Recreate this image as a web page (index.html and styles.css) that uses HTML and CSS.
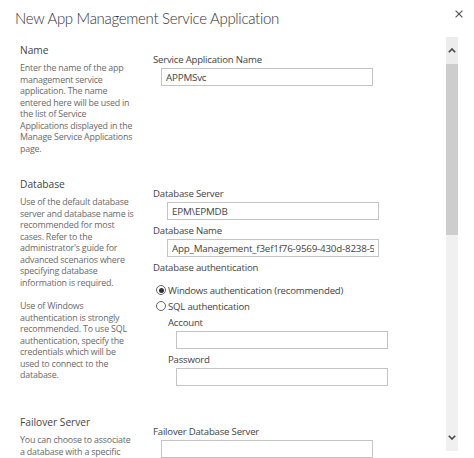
FILE: index.html
```html
<!DOCTYPE html>
<html>
<head>
<meta charset="utf-8">
<title>New App Management Service Application</title>
<link rel="stylesheet" href="styles.css">
</head>
<body>
<div class="dialog">
  <div class="titlebar">
    <h1 class="title">New App Management Service Application</h1>
    <span class="close" aria-label="Close"><svg width="8" height="8" viewBox="0 0 8 8"><path d="M0.6 0.6L7.4 7.4M7.4 0.6L0.6 7.4" stroke="#555" stroke-width="1.2" fill="none"/></svg></span>
  </div>
  <div class="frame">
    <div class="content">
      <section class="section sec-name">
        <div class="desc">
          <h2 class="sec-title">Name</h2>
          <p class="sec-text">Enter the name of the app<br>management service<br>application. The name<br>entered here will be used in<br>the list of Service<br>Applications displayed in the<br>Manage Service Applications<br>page.</p>
        </div>
        <div class="fields">
          <div class="field-label">Service Application Name</div>
          <input class="textbox ind-s" value="APPMSvc">
        </div>
      </section>

      <section class="section sec-db">
        <div class="desc">
          <h2 class="sec-title">Database</h2>
          <p class="sec-text">Use of the default database<br>server and database name is<br>recommended for most<br>cases. Refer to the<br>administrator's guide for<br>advanced scenarios where<br>specifying database<br>information is required.</p>
          <p class="sec-text para">Use of Windows<br>authentication is strongly<br>recommended. To use SQL<br>authentication, specify the<br>credentials which will be<br>used to connect to the<br>database.</p>
        </div>
        <div class="fields">
          <div class="field-label">Database Server</div>
          <input class="textbox ind-m" value="EPM\EPMDB">
          <div class="field-label">Database Name</div>
          <input class="textbox ind-m" value="App_Management_f3ef1f76-9569-430d-8238-5c2a7d1e9b04">
          <div class="field-label">Database authentication</div>
          <div class="radios">
            <div class="radio-row"><span class="radio checked"></span><span>Windows authentication (recommended)</span></div>
            <div class="radio-row"><span class="radio"></span><span>SQL authentication</span></div>
          </div>
          <div class="field-label ind-l sub-first">Account</div>
          <input class="textbox ind-xl">
          <div class="field-label ind-l">Password</div>
          <input class="textbox ind-xl last" type="password">
        </div>
      </section>

      <section class="section sec-fail">
        <div class="desc">
          <h2 class="sec-title">Failover Server</h2>
          <p class="sec-text">You can choose to associate<br>a database with a specific<br>failover server that is used in<br>conjunction with SQL Server<br>database mirroring.</p>
        </div>
        <div class="fields">
          <div class="field-label">Failover Database Server</div>
          <input class="textbox ind-s">
        </div>
      </section>
    </div>

    <div class="scrollbar">
      <div class="sb-btn sb-up"><svg width="8" height="5" viewBox="0 0 8 5"><path d="M0.8 4.2L4 1L7.2 4.2" stroke="#444" stroke-width="1.6" fill="none"/></svg></div>
      <div class="sb-thumb"></div>
      <div class="sb-track"></div>
      <div class="sb-btn sb-down"><svg width="8" height="5" viewBox="0 0 8 5"><path d="M0.8 0.8L4 4L7.2 0.8" stroke="#444" stroke-width="1.6" fill="none"/></svg></div>
    </div>
  </div>
</div>
</body>
</html>
```

FILE: styles.css
```css
html, body {
  margin: 0;
  padding: 0;
  background: #ffffff;
}

body {
  width: 474px;
  height: 458px;
  overflow: hidden;
  font-family: "Open Sans", "Noto Sans", sans-serif;
  color: #444444;
}

.dialog {
  display: flex;
  flex-direction: column;
  height: 458px;
}

.titlebar {
  display: flex;
  justify-content: space-between;
  align-items: flex-start;
  height: 37px;
  flex: none;
}

.title {
  margin: 0;
  padding: 8px 0 0 15px;
  font-family: "Lato", "Open Sans", sans-serif;
  font-weight: 300;
  font-size: 15px;
  letter-spacing: -0.3px;
  line-height: 20px;
  color: #333333;
}

.close {
  display: block;
  width: 8px;
  height: 8px;
  margin: 10px 11px 0 0;
}

.close svg {
  display: block;
}

.frame {
  display: flex;
  flex: 1;
  min-height: 0;
  padding-right: 16px;
}

.content {
  flex: 1;
  overflow: hidden;
}

.section {
  display: flex;
  align-items: flex-start;
}

.sec-name {
  padding-top: 6px;
  margin-bottom: 23px;
}

.sec-db {
  margin-bottom: 29px;
}

.desc {
  width: 133px;
  padding-left: 20px;
  flex: none;
}

.sec-title {
  margin: 0 0 5px;
  font-size: 10.2px;
  font-weight: 400;
  line-height: 14px;
  color: #444444;
}

.sec-text {
  margin: 0;
  font-size: 8.9px;
  letter-spacing: -0.2px;
  line-height: 11.5px;
  color: #6a6a6a;
  white-space: nowrap;
}

.sec-text.para {
  margin-top: 12px;
}

.fields {
  display: flex;
  flex-direction: column;
  align-items: flex-start;
  padding-top: 10px;
}

.field-label {
  font-size: 9.6px;
  letter-spacing: -0.2px;
  line-height: 14px;
  margin-bottom: 1px;
  color: #444444;
  white-space: nowrap;
}

.field-label.sub-first {
  margin-top: 2px;
}

.textbox {
  box-sizing: border-box;
  width: 212px;
  height: 18px;
  margin: 0 0 4px;
  padding: 0 4px;
  border: 1px solid #c4c4c4;
  background: #ffffff;
  font-family: "Open Sans", "Noto Sans", sans-serif;
  font-size: 9.8px;
  letter-spacing: -0.2px;
  color: #444444;
  outline: none;
}

.textbox.last {
  margin-bottom: 0;
}

.ind-s { margin-left: 8px; }
.ind-m { margin-left: 14px; }
.ind-l { margin-left: 15px; }
.ind-xl { margin-left: 23px; }

.radios {
  margin-top: 6px;
  display: flex;
  flex-direction: column;
}

.radio-row {
  display: flex;
  align-items: center;
  height: 16px;
  padding-left: 3px;
  font-size: 9.6px;
  letter-spacing: -0.2px;
  color: #444444;
  white-space: nowrap;
}

.radio {
  box-sizing: border-box;
  width: 10px;
  height: 10px;
  margin-right: 2px;
  border: 1px solid #666666;
  border-radius: 50%;
  background: #ffffff;
  display: flex;
  align-items: center;
  justify-content: center;
}

.radio.checked::after {
  content: "";
  width: 5px;
  height: 5px;
  border-radius: 50%;
  background: #333333;
}

.scrollbar {
  width: 12px;
  flex: none;
  display: flex;
  flex-direction: column;
  margin-bottom: 7px;
  background: #f0f0f0;
}

.sb-btn {
  height: 27px;
  display: flex;
  align-items: center;
  justify-content: center;
  flex: none;
}

.sb-up {
  background: #ececec;
}

.sb-thumb {
  height: 171px;
  background: #cdcdcd;
  flex: none;
}

.sb-track {
  flex: 1;
}

.sb-btn svg {
  display: block;
}
```
